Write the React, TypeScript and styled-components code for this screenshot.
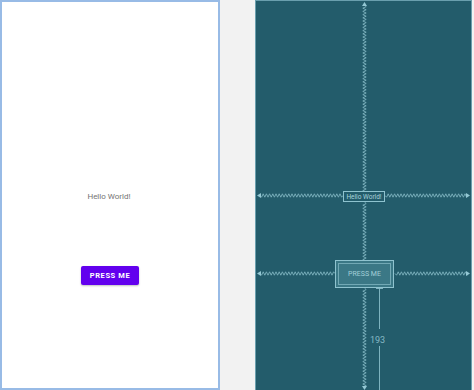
import React from 'react';
import styled, { createGlobalStyle } from 'styled-components';

const GlobalStyle = createGlobalStyle`
  html, body {
    margin: 0;
    padding: 0;
    background: #f2f2f2;
    font-family: Roboto, "Liberation Sans", Arial, sans-serif;
  }
`;

const Editor = styled.div`
  display: flex;
  gap: 35px;
  width: 474px;
  height: 390px;
  background: #f2f2f2;
  overflow: hidden;
`;

// Design preview
const Phone = styled.div`
  width: 220px;
  height: 390px;
  box-sizing: border-box;
  border: 2px solid #98bbe6;
  background: #ffffff;
  display: flex;
  flex-direction: column;
  align-items: center;
  padding-top: 189px;
`;

const HelloText = styled.div`
  font-size: 8px;
  line-height: 12px;
  color: #737373;
  margin-right: 2px;
`;

const PressButton = styled.button`
  margin-top: 63px;
  width: 58px;
  height: 19px;
  border: none;
  border-radius: 2px;
  background: #6200ee;
  color: #ffffff;
  font-family: Roboto, "Liberation Sans", Arial, sans-serif;
  font-size: 7.5px;
  font-weight: 700;
  letter-spacing: 0.6px;
  padding: 0;
  box-shadow: 0 1px 2px rgba(0, 0, 0, 0.25);
`;

// Blueprint view
const Blueprint = styled.div`
  position: relative;
  width: 217px;
  height: 390px;
  box-sizing: border-box;
  background: #235c6b;
  border: 1px solid #6a9fae;
  border-bottom: none;
`;

const Overlay = styled.svg`
  position: absolute;
  inset: 0;
`;

const WidgetBox = styled.div<{ $x: number; $y: number; $w: number; $h: number; $filled?: boolean }>`
  position: absolute;
  left: ${p => p.$x}px;
  top: ${p => p.$y}px;
  width: ${p => p.$w}px;
  height: ${p => p.$h}px;
  box-sizing: border-box;
  border: 1px solid #8fc3cf;
  background: ${p => (p.$filled ? '#3b7886' : '#235c6b')};
  display: flex;
  align-items: center;
  justify-content: center;
  color: #a9d3dc;
  font-size: 6.5px;
  white-space: nowrap;
`;

const InnerFrame = styled.div`
  position: absolute;
  inset: 2px;
  border: 1px solid rgba(160, 210, 220, 0.55);
`;

const WidgetLabel = styled.span`
  position: relative;
  font-size: 7px;
  color: #a3cfd8;
`;

const Dimension = styled.span`
  position: absolute;
  left: 114px;
  top: 334px;
  font-size: 9px;
  color: #86b9c5;
`;

const LINE = '#94c8d4';

function zigV(x: number, y1: number, y2: number) {
  let d = `M${x} ${y1}`;
  let side = 1;
  for (let y = y1 + 1.6; y < y2; y += 1.6) {
    d += ` L${x + side * 1.7} ${y}`;
    side = -side;
  }
  return d + ` L${x} ${y2}`;
}

function zigH(y: number, x1: number, x2: number) {
  let d = `M${x1} ${y}`;
  let side = 1;
  for (let x = x1 + 1.6; x < x2; x += 1.6) {
    d += ` L${x} ${y + side * 1.7}`;
    side = -side;
  }
  return d + ` L${x2} ${y}`;
}

const Constraints: React.FC = () => (
  <Overlay width="215" height="390" viewBox="0 0 215 390">
    <g stroke={LINE} strokeWidth="0.9" fill="none" opacity="0.8">
      <path d={zigV(108.5, 4, 190)} />
      <path d={zigV(108.5, 201, 259)} />
      <path d={zigV(108.5, 287, 385)} />
      <path d={zigH(194.5, 4, 87)} />
      <path d={zigH(194.5, 129, 211)} />
      <path d={zigH(272.5, 4, 79)} />
      <path d={zigH(272.5, 139, 211)} />
    </g>
    <g stroke={LINE} strokeWidth="0.9" fill="none" opacity="0.9">
      <path d="M123.5 287 V328 M123.5 345 V389" />
      <path d="M120 287.5 H127" />
    </g>
    <g fill={LINE}>
      <path d="M108.5 1 L106 5 L111 5 Z" />
      <path d="M108.5 389 L106 385 L111 385 Z" />
      <path d="M1 194.5 L5 192 L5 197 Z" />
      <path d="M214 194.5 L210 192 L210 197 Z" />
      <path d="M1 272.5 L5 270 L5 275 Z" />
      <path d="M214 272.5 L210 270 L210 275 Z" />
    </g>
  </Overlay>
);

export default function App() {
  return (
    <>
      <GlobalStyle />
      <Editor>
        <Phone>
          <HelloText>Hello World!</HelloText>
          <PressButton>PRESS ME</PressButton>
        </Phone>
        <Blueprint>
          <Constraints />
          <WidgetBox $x={87} $y={190} $w={42} $h={11}>
            Hello World!
          </WidgetBox>
          <WidgetBox $x={79} $y={259} $w={59} $h={28} $filled>
            <InnerFrame />
            <WidgetLabel>PRESS ME</WidgetLabel>
          </WidgetBox>
          <Dimension>193</Dimension>
        </Blueprint>
      </Editor>
    </>
  );
}
